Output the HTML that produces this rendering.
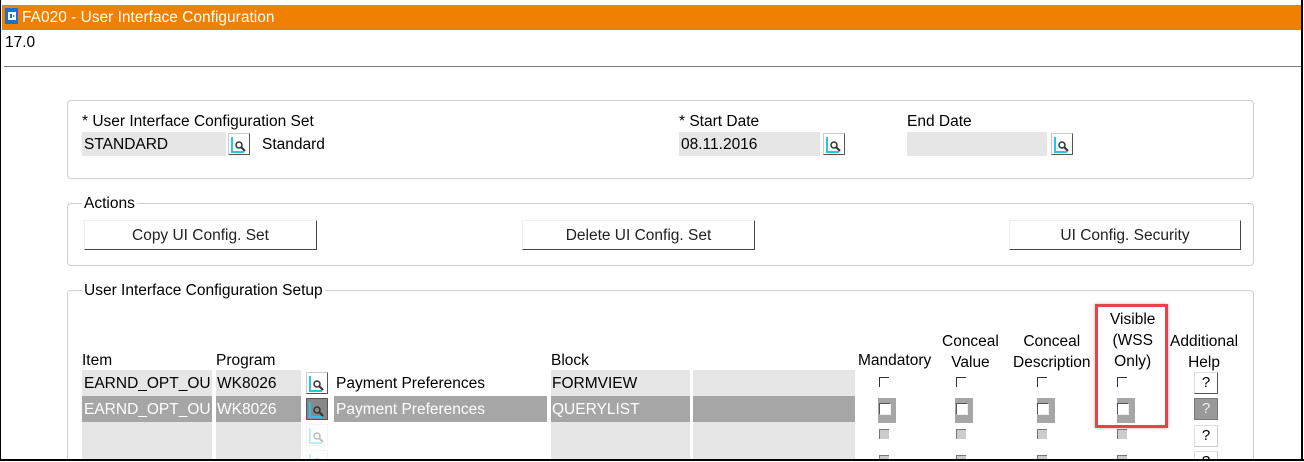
<!DOCTYPE html>
<html><head><style>
*{margin:0;padding:0;box-sizing:border-box}
html,body{width:1304px;height:462px;overflow:hidden}
body{background:#fff;font-family:"Liberation Sans",Arial,sans-serif;font-size:15.5px;color:#000}
#w{position:relative;width:1304px;height:462px;overflow:hidden}
.a{position:absolute;white-space:nowrap}
.box{position:absolute;border:1px solid #d0d0d0;border-radius:4px}
.fld{position:absolute;background:#e6e6e6;height:24px;line-height:25px;padding-left:2px}
.btn{position:absolute;height:30px;border-right:1px solid #444;border-bottom:1px solid #444;border-top:1px solid #eee;border-left:1px solid #eee;text-align:center;line-height:30px;color:#222}
.lk{position:absolute;width:22px;height:22px;border:1px solid #ccc;border-right-color:#555;border-bottom-color:#555;background:#fff}
.cb{position:absolute;width:10px;height:10px;border-left:1px solid #333;border-top:1px solid #333}
.hp{position:absolute;width:24px;height:22px;border:1px solid #ddd;border-right-color:#555;border-bottom-color:#555;text-align:center;line-height:20px;font-size:15px}
.c{text-align:center}
</style></head><body><div id="w">
<div class="a" style="left:0;top:0;width:1px;height:462px;background:#000"></div>
<div class="a" style="left:1301px;top:0;width:2px;height:462px;background:#000"></div>
<div class="a" style="left:2px;top:5px;width:1299px;height:25px;background:#f08000"></div>
<svg class="a" style="left:5px;top:8px" width="14" height="17"><rect x="0" y="0" width="13" height="16" fill="#1a73c8"/><rect x="3" y="4" width="8" height="8" fill="#fff"/><path d="M5 6h2v4H5zM8 7l2 1-2 1z" fill="#1a73c8"/></svg>
<div class="a" style="left:22px;top:9px;color:#fff;font-size:15.5px">FA020 - User Interface Configuration</div>
<div class="a" style="left:5px;top:34px">17.0</div>
<div class="a" style="left:4px;top:66px;width:1297px;height:1px;background:#777"></div>

<div class="box" style="left:67px;top:100px;width:1187px;height:79px"></div>
<div class="a" style="left:82px;top:113px">* User Interface Configuration Set</div>
<div class="fld" style="left:82px;top:132px;width:144px">STANDARD</div>
<div class="lk" style="left:228px;top:133px"></div>
<div class="a" style="left:262px;top:136px">Standard</div>
<div class="a" style="left:679px;top:113px">* Start Date</div>
<div class="fld" style="left:679px;top:132px;width:141px">08.11.2016</div>
<div class="lk" style="left:823px;top:133px"></div>
<div class="a" style="left:907px;top:113px">End Date</div>
<div class="fld" style="left:907px;top:132px;width:140px"></div>
<div class="lk" style="left:1051px;top:133px"></div>

<div class="box" style="left:67px;top:203px;width:1187px;height:63px"></div>
<div class="a" style="left:82px;top:195px;background:#fff;padding:0 2px">Actions</div>
<div class="btn" style="left:84px;top:220px;width:233px">Copy UI Config. Set</div>
<div class="btn" style="left:522px;top:220px;width:233px">Delete UI Config. Set</div>
<div class="btn" style="left:1009px;top:220px;width:232px">UI Config. Security</div>

<div class="box" style="left:67px;top:290px;width:1187px;height:172px;border-bottom:none;border-radius:4px 4px 0 0"></div>
<div class="a" style="left:82px;top:282px;background:#fff;padding:0 2px">User Interface Configuration Setup</div>

<div class="a" style="left:82px;top:352px">Item</div>
<div class="a" style="left:216px;top:352px">Program</div>
<div class="a" style="left:551px;top:352px">Block</div>
<div class="a" style="left:858px;top:352px">Mandatory</div>
<div class="a c" style="left:942px;top:331px;line-height:21px">Conceal<br>Value</div>
<div class="a c" style="left:1013px;top:331px;line-height:21px">Conceal<br>Description</div>
<div class="a c" style="left:1110px;top:309px;line-height:21px">Visible<br>(WSS<br>Only)</div>
<div class="a c" style="left:1170px;top:331px;line-height:21px">Additional<br>Help</div>
<div class="a" style="left:1095px;top:304px;width:73px;height:124px;border:3px solid #e8424a;box-shadow:0 0 3px rgba(0,0,0,.3)"></div>

<div class="a" style="left:82px;top:370px;width:130px;height:92px;background:#e6e6e6"></div>
<div class="a" style="left:216px;top:370px;width:85px;height:92px;background:#e6e6e6"></div>
<div class="a" style="left:551px;top:370px;width:139px;height:92px;background:#e6e6e6"></div>
<div class="a" style="left:693px;top:370px;width:162px;height:92px;background:#e6e6e6"></div>
<div class="a" style="left:82px;top:396px;width:130px;height:26px;background:#a6a6a6"></div>
<div class="a" style="left:216px;top:396px;width:85px;height:26px;background:#a6a6a6"></div>
<div class="a" style="left:334px;top:396px;width:213px;height:26px;background:#a6a6a6"></div>
<div class="a" style="left:551px;top:396px;width:139px;height:26px;background:#a6a6a6"></div>
<div class="a" style="left:693px;top:396px;width:162px;height:26px;background:#a6a6a6"></div>

<div class="a" style="left:84px;top:375px;width:128px;overflow:hidden">EARND_OPT_OU</div>
<div class="a" style="left:217px;top:375px">WK8026</div>
<div class="a" style="left:336px;top:375px">Payment Preferences</div>
<div class="a" style="left:552px;top:375px">FORMVIEW</div>
<div class="a" style="left:84px;top:401px;width:128px;overflow:hidden;color:#fff">EARND_OPT_OU</div>
<div class="a" style="left:217px;top:401px;color:#fff">WK8026</div>
<div class="a" style="left:336px;top:401px;color:#fff">Payment Preferences</div>
<div class="a" style="left:552px;top:401px;color:#fff">QUERYLIST</div>

<div class="lk" style="left:306px;top:372px"></div>
<div class="lk" style="left:306px;top:398px;background:#888;border-color:#555"></div>
<div class="lk" style="left:306px;top:424px;border-color:#e6e6e6;opacity:.4"></div>
<div class="lk" style="left:306px;top:450px;height:12px;border-bottom:none;border-color:#e6e6e6;opacity:.4"></div>

<div class="cb" style="left:879px;top:377px"></div><div class="cb" style="left:956px;top:377px"></div><div class="cb" style="left:1037px;top:377px"></div><div class="cb" style="left:1117px;top:377px"></div>
<div class="a" style="left:878px;top:398px;width:18px;height:25px;background:#a6a6a6"></div><div class="a" style="left:955px;top:398px;width:18px;height:25px;background:#a6a6a6"></div><div class="a" style="left:1037px;top:398px;width:18px;height:25px;background:#a6a6a6"></div><div class="a" style="left:1117px;top:398px;width:18px;height:25px;background:#a6a6a6"></div>
<div class="a" style="left:879px;top:403px;width:12px;height:12px;background:#fff;border:1px solid #555;border-right-color:#eee;border-bottom-color:#eee"></div>
<div class="a" style="left:956px;top:403px;width:12px;height:12px;background:#fff;border:1px solid #555;border-right-color:#eee;border-bottom-color:#eee"></div>
<div class="a" style="left:1037px;top:403px;width:12px;height:12px;background:#fff;border:1px solid #555;border-right-color:#eee;border-bottom-color:#eee"></div>
<div class="a" style="left:1117px;top:403px;width:12px;height:12px;background:#fff;border:1px solid #555;border-right-color:#eee;border-bottom-color:#eee"></div>
<div class="a" style="left:879px;top:429px;width:10px;height:10px;background:#ccc;border-left:1px solid #777;border-top:1px solid #777"></div><div class="a" style="left:956px;top:429px;width:10px;height:10px;background:#ccc;border-left:1px solid #777;border-top:1px solid #777"></div><div class="a" style="left:1037px;top:429px;width:10px;height:10px;background:#ccc;border-left:1px solid #777;border-top:1px solid #777"></div><div class="a" style="left:1117px;top:429px;width:10px;height:10px;background:#ccc;border-left:1px solid #777;border-top:1px solid #777"></div>
<div class="a" style="left:879px;top:455px;width:10px;height:4px;background:#ccc;border-left:1px solid #777;border-top:1px solid #777"></div><div class="a" style="left:956px;top:455px;width:10px;height:4px;background:#ccc;border-left:1px solid #777;border-top:1px solid #777"></div><div class="a" style="left:1037px;top:455px;width:10px;height:4px;background:#ccc;border-left:1px solid #777;border-top:1px solid #777"></div><div class="a" style="left:1117px;top:455px;width:10px;height:4px;background:#ccc;border-left:1px solid #777;border-top:1px solid #777"></div>

<div class="hp" style="left:1194px;top:372px">?</div>
<div class="hp" style="left:1194px;top:398px;background:#999;color:#eee;border-color:#777">?</div>
<div class="hp" style="left:1194px;top:425px;border-right-color:#ccc;border-bottom-color:#ccc">?</div>
<div class="hp" style="left:1194px;top:451px;height:8px;overflow:hidden;border-bottom:none;border-right-color:#ccc">?</div>

<svg width="0" height="0" style="position:absolute"><defs><g id="ic"><path d="M3 3v15h12" stroke="#29c4e6" stroke-width="2" fill="none"/><circle cx="10" cy="11" r="3" stroke="#333" stroke-width="1.5" fill="none"/><path d="M12 13l4 4" stroke="#333" stroke-width="2"/></g></defs></svg>
<svg class="a" style="left:229px;top:134px" width="20" height="20"><use href="#ic"/></svg>
<svg class="a" style="left:824px;top:134px" width="20" height="20"><use href="#ic"/></svg>
<svg class="a" style="left:1052px;top:134px" width="20" height="20"><use href="#ic"/></svg>
<svg class="a" style="left:307px;top:373px" width="20" height="20"><use href="#ic"/></svg>
<svg class="a" style="left:307px;top:399px" width="20" height="20"><use href="#ic"/></svg>
<svg class="a" style="left:307px;top:425px;opacity:.3" width="20" height="20"><use href="#ic"/></svg>
<svg class="a" style="left:307px;top:451px;opacity:.3" width="20" height="8"><use href="#ic"/></svg>
<div class="a" style="left:0;top:459px;width:1304px;height:2px;background:#000"></div>
<div class="a" style="left:0;top:461px;width:1304px;height:1px;background:#fff"></div>
</div></body></html>
